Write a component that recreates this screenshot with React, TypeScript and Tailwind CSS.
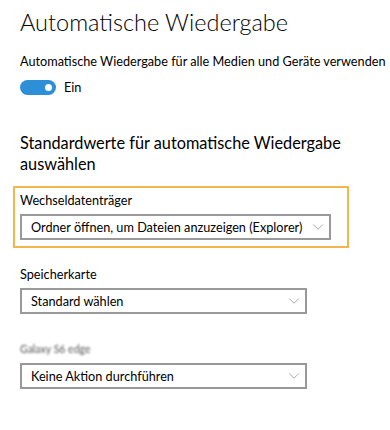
import { ChevronDown } from 'lucide-react';

const font = { fontFamily: 'Lato, "Noto Sans", sans-serif' };

function Dropdown({ value, width }: { value: string; width: string }) {
  return (
    <div
      className={`flex items-center justify-between h-[26px] border-2 border-[#999999] bg-white pl-[9px] pr-[2px] ${width}`}
    >
      <span className="text-[12.7px] leading-none text-black whitespace-nowrap">{value}</span>
      <ChevronDown className="w-[18px] h-[18px] text-[#8a8a8a]" strokeWidth={1} />
    </div>
  );
}

export default function App() {
  return (
    <main className="w-[390px] h-[430px] bg-white overflow-hidden pl-5 pt-[6px]" style={font}>
      <h1 className="text-[23.5px] font-light leading-8 text-black">
        Automatische Wiedergabe
      </h1>

      <p className="mt-[13px] text-[12.7px] leading-5 text-black whitespace-nowrap">
        Automatische Wiedergabe für alle Medien und Geräte verwenden
      </p>

      <div className="mt-[7px] flex items-center gap-[8px]">
        <div className="relative w-[36px] h-[15px] rounded-full bg-[#2d8fd5]">
          <span className="absolute right-[4px] top-[4px] w-[7px] h-[7px] rounded-full bg-white" />
        </div>
        <span className="text-[12.7px] text-black">Ein</span>
      </div>

      <h2 className="mt-[35px] text-[16.3px] leading-[21px] text-black w-[350px]">
        Standardwerte für automatische Wiedergabe auswählen
      </h2>

      <div className="mt-[12px] -ml-[7px] w-[336px] border-2 border-[#f2b64c] pl-[5px] pt-[2px] pb-[6px]">
        <p className="text-[12.7px] leading-5 text-black">Wechseldatenträger</p>
        <div className="mt-[4px]">
          <Dropdown value="Ordner öffnen, um Dateien anzuzeigen (Explorer)" width="w-[311px]" />
        </div>
      </div>

      <p className="mt-[16px] text-[12.7px] leading-5 text-black">Speicherkarte</p>
      <div className="mt-[4px]">
        <Dropdown value="Standard wählen" width="w-[287px]" />
      </div>

      <p className="mt-[27px] text-[10.5px] leading-4 text-[#555555] blur-[1px]">Galaxy S6 edge</p>
      <div className="mt-[6px]">
        <Dropdown value="Keine Aktion durchführen" width="w-[287px]" />
      </div>
    </main>
  );
}
